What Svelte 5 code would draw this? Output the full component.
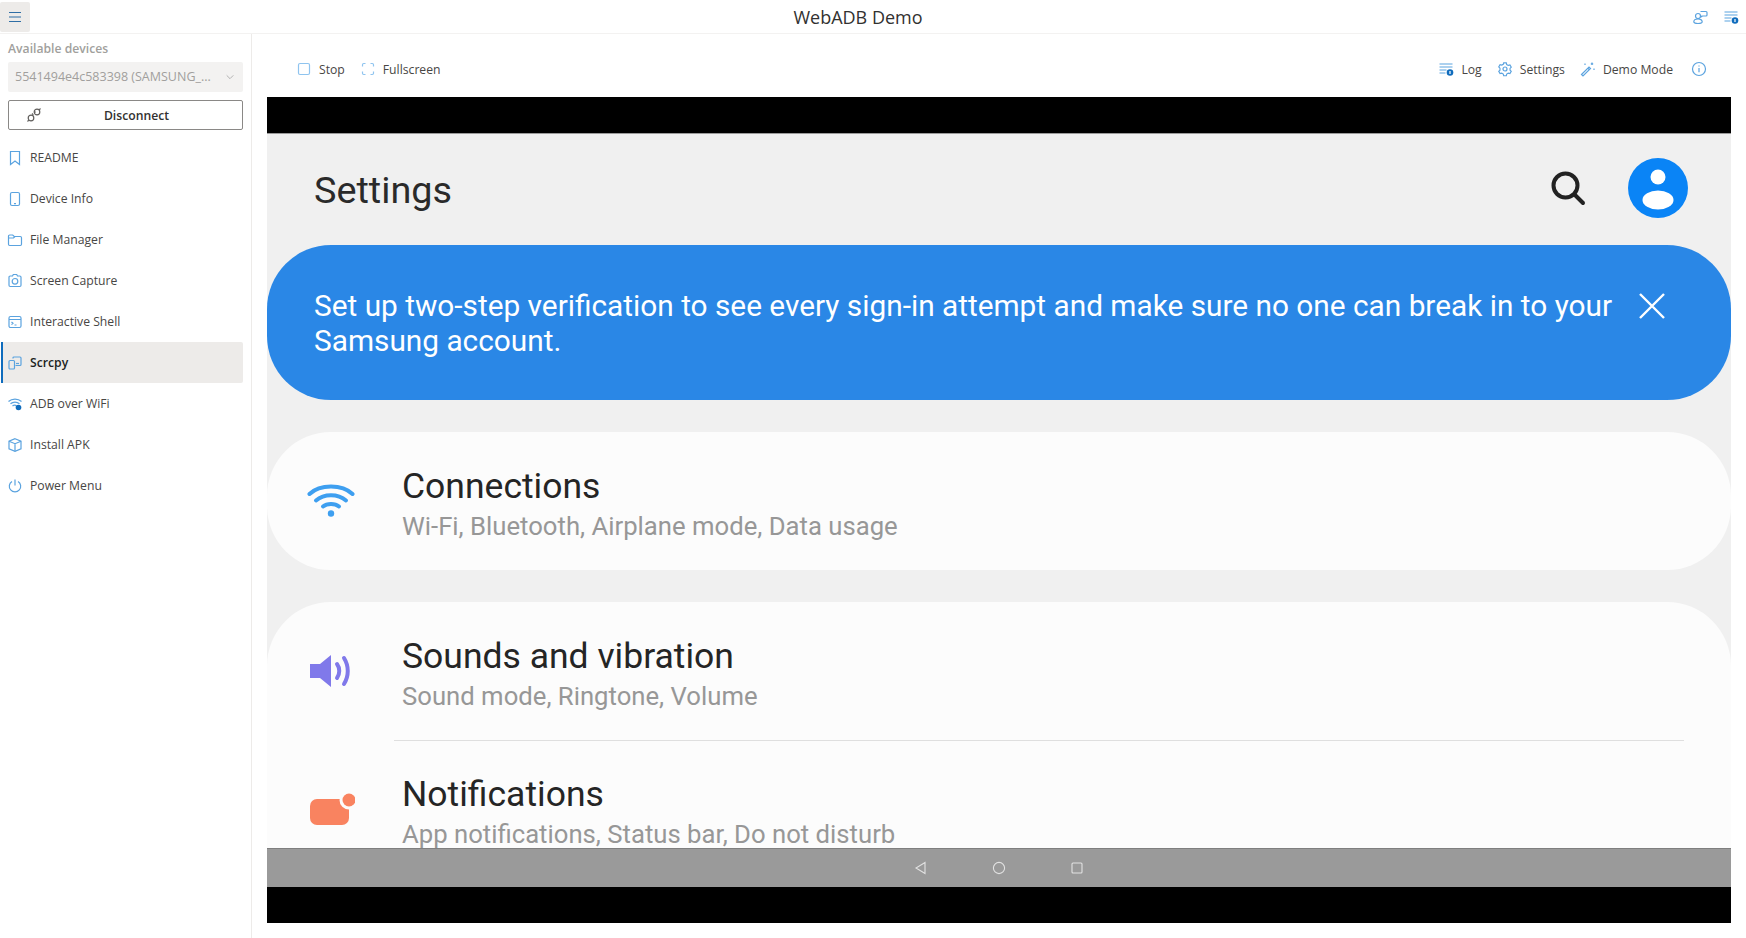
<script>
  const nav = [
    { name: 'README', icon: 'readme' },
    { name: 'Device Info', icon: 'device' },
    { name: 'File Manager', icon: 'folder' },
    { name: 'Screen Capture', icon: 'camera' },
    { name: 'Interactive Shell', icon: 'shell' },
    { name: 'Scrcpy', icon: 'scrcpy', active: true },
    { name: 'ADB over WiFi', icon: 'wifi' },
    { name: 'Install APK', icon: 'box' },
    { name: 'Power Menu', icon: 'power' }
  ];
</script>

{#snippet icon(name)}
  <svg class="ico" viewBox="0 0 16 16" fill="none" stroke="currentColor" stroke-width="1.2">
    {#if name === 'readme'}
      <path d="M3.5 1.5h9v13L8 11 3.5 14.500z" />
    {:else if name === 'device'}
      <rect x="3.5" y="1.5" width="9" height="13" rx="1.5" />
      <path d="M7 12.700h2" />
    {:else if name === 'folder'}
      <path d="M1.500 4.200c0-.7.5-1.200 1.200-1.200h3l1.500 1.500h6.100c.7 0 1.200.5 1.200 1.200v6.600c0 .7-.5 1.200-1.200 1.200H2.700c-.7 0-1.200-.5-1.200-1.200z" />
      <path d="M1.500 6h5l1.500-1.500" />
    {:else if name === 'camera'}
      <path d="M5.500 3l.8-1.500h3.400l.8 1.500h2.300c.7 0 1.200.5 1.200 1.200v8.100c0 .7-.5 1.200-1.200 1.200H3.200c-.7 0-1.200-.5-1.200-1.200V4.200C2 3.500 2.500 3 3.200 3z" />
      <circle cx="8" cy="8.300" r="2.800" />
    {:else if name === 'shell'}
      <rect x="2" y="2.500" width="12" height="11" rx="1.500" />
      <path d="M2 5.500h12M4.500 8l1.500 1.300-1.500 1.300M7.500 11h2" />
    {:else if name === 'scrcpy'}
      <path d="M6 3.500V3c0-.6.4-1 1-1h6c.6 0 1 .4 1 1v6.500c0 .6-.4 1-1 1H8.500" />
      <rect x="2" y="5.500" width="5.500" height="8.500" rx="1" />
      <path d="M9 8.500h3" />
    {:else if name === 'wifi'}
      <path d="M1.500 5.500c3.500-3.300 9.500-3.300 13 0M3.500 7.800c2.500-2.200 6.500-2.200 9 0M5.500 10c1.300-1 3-1 4 0" />
      <circle cx="11.500" cy="11.500" r="2.800" fill="#0f6cbd" stroke="none" />
    {:else if name === 'box'}
      <path d="M8 1.700l6 2.500v7.600l-6 2.500-6-2.500V4.200z" />
      <path d="M2 4.200l6 2.500 6-2.500M8 6.700v7.600" />
    {:else if name === 'power'}
      <path d="M8 1.500v6" />
      <path d="M5 3.400a5.700 5.700 0 1 0 6 0" />
    {:else if name === 'log'}
      <path d="M1.500 3h13M1.500 6h13M1.500 9h7M1.500 12h6" />
      <circle cx="12" cy="11.500" r="3.300" fill="#0f6cbd" stroke="none" />
      <path d="M12 10v3" stroke="#fff" />
    {:else if name === 'gear'}
      <path d="M6.600 1.500h2.800l.4 1.800 1.600.9 1.800-.5 1.400 2.400-1.300 1.300v1.800l1.300 1.300-1.400 2.400-1.800-.5-1.600.9-.4 1.800H6.600l-.4-1.800-1.600-.9-1.800.5-1.400-2.400 1.300-1.300V7.100L1.400 5.800l1.400-2.400 1.800.5 1.600-.9z" transform="translate(.4 .4) scale(.95)" />
      <circle cx="8" cy="8" r="2" />
    {:else if name === 'wand'}
      <path d="M1.500 13.500l7.500-7.500 1.500 1.500-7.500 7.500z" />
      <path d="M7.800 7.200l1.500 1.500M12 1.500v2.500M10.800 2.800h2.400M14 7.500v1.500M5 2.500v1.500" />
    {:else if name === 'info'}
      <circle cx="8" cy="8" r="6.500" />
      <path d="M8 7v4.200M8 4.500v1.100" />
    {:else if name === 'stop'}
      <rect x="2.500" y="2.500" width="11" height="11" rx="1.500" />
    {:else if name === 'full'}
      <path d="M2.500 5.500V3.700c0-.7.5-1.200 1.200-1.200h1.800M10.500 2.500h1.800c.7 0 1.200.5 1.200 1.200v1.800M13.500 10.500v1.800c0 .7-.5 1.200-1.200 1.200h-1.800M5.500 13.500H3.700c-.7 0-1.200-.5-1.200-1.200v-1.800" />
    {:else if name === 'chat'}
      <circle cx="6" cy="7" r="2.500" />
      <path d="M1.800 12.800c0-1.700 2-2.800 4.200-2.800s4.200 1.100 4.200 2.800c0 1-2 1.700-4.200 1.700s-4.200-.7-4.200-1.700z" />
      <path d="M8.500 2.500h5.500a1 1 0 0 1 1 1v2.500a1 1 0 0 1-1 1h-3.500l-1.500 1v-1.500" />
    {:else if name === 'plug'}
      <circle cx="5" cy="11" r="2.800" />
      <circle cx="11" cy="5" r="2.800" />
      <path d="M2.800 13.200l-1.300 1.300M13.200 2.800l1.300-1.300M6 6.500l1.300 1.300M8.500 4.500l1 1" />
    {/if}
  </svg>
{/snippet}

<div class="page">
  <header>
    <button class="burger" aria-label="Menu">
      <svg viewBox="0 0 16 16" width="16" height="16" fill="none" stroke="#2f6ea5" stroke-width="1.100"><path d="M2 3.500h12M2 8h12M2 12.500h12" /></svg>
    </button>
    <h1>WebADB Demo</h1>
    <div class="top-icons">
      <span class="top-ico">{@render icon('chat')}</span>
      <span class="top-ico">{@render icon('log')}</span>
    </div>
  </header>

  <div class="body">
    <aside>
      <div class="devices">
        <div class="label">Available devices</div>
        <div class="select">
          <span>5541494e4c583398 (SAMSUNG_...</span>
          <svg viewBox="0 0 12 12" width="10" height="10" fill="none" stroke="#a6a6a6"><path d="M2 4l4 4 4-4" /></svg>
        </div>
        <button class="disconnect">
          <span class="plug">{@render icon('plug')}</span>
          <span class="disc-text">Disconnect</span>
        </button>
      </div>
      <nav>
        {#each nav as item}
          <div class="item" class:active={item.active}>
            {@render icon(item.icon)}
            <span>{item.name}</span>
          </div>
        {/each}
      </nav>
    </aside>

    <main>
      <div class="toolbar">
        <div class="tool-group">
          <span class="tool light">{@render icon('stop')}Stop</span>
          <span class="tool light">{@render icon('full')}Fullscreen</span>
        </div>
        <div class="tool-group">
          <span class="tool">{@render icon('log')}Log</span>
          <span class="tool">{@render icon('gear')}Settings</span>
          <span class="tool">{@render icon('wand')}Demo Mode</span>
          <span class="tool info">{@render icon('info')}</span>
        </div>
      </div>

      <div class="device-frame">
        <div class="black"></div>
        <div class="screen">
          <div class="scroll">
            <div class="title-row">
              <div class="title">Settings</div>
              <svg class="search" viewBox="0 0 36 36" fill="none" stroke="#222" stroke-width="4" stroke-linecap="round">
                <circle cx="15.500" cy="15.500" r="12" />
                <path d="M24.500 24.500L33 33" />
              </svg>
              <svg class="avatar" viewBox="0 0 60 60">
                <circle cx="30" cy="30" r="30" fill="#0a84f6" />
                <circle cx="30" cy="19" r="7.500" fill="#fff" />
                <ellipse cx="30" cy="42" rx="15.500" ry="9.500" fill="#fff" />
              </svg>
            </div>

            <div class="banner">
              <p>Set up two-step verification to see every sign-in attempt and make sure no one can break in to your Samsung account.</p>
              <svg class="close" viewBox="0 0 26 26" fill="none" stroke="#fff" stroke-width="2.400"><path d="M1 1l24 24M25 1L1 25" /></svg>
            </div>

            <div class="card one">
              <svg class="s-ico wifi" viewBox="0 0 48 36" fill="none" stroke="#3e9ff0" stroke-width="4" stroke-linecap="round">
                <path d="M2.500 12C13 2 35 2 45.500 12" />
                <path d="M9 18.500c8-7 22-7 30 0" />
                <path d="M16 24.500c4-3.500 12-3.500 16 0" />
                <circle cx="24" cy="31.500" r="3.200" fill="#3e9ff0" stroke="none" />
              </svg>
              <div class="s-text">
                <div class="s-title">Connections</div>
                <div class="s-sub">Wi-Fi, Bluetooth, Airplane mode, Data usage</div>
              </div>
            </div>

            <div class="card two">
              <div class="row sounds">
                <svg class="s-ico" viewBox="0 0 48 36" fill="none" stroke="#8079ea" stroke-width="4" stroke-linecap="round">
                  <path d="M3 11h10L24 2v32L13 25H3z" fill="#8079ea" stroke="none" />
                  <path d="M30 11c3 4 3 10 0 14" />
                  <path d="M37 5c5 8 5 18 0 26" />
                </svg>
                <div class="s-text">
                  <div class="s-title">Sounds and vibration</div>
                  <div class="s-sub">Sound mode, Ringtone, Volume</div>
                </div>
              </div>
              <div class="sep"></div>
              <div class="row notif">
                <svg class="s-ico" viewBox="0 0 48 36">
                  <rect x="3" y="7" width="39" height="26" rx="7" fill="#f98360" />
                  <circle cx="42" cy="8" r="9.500" fill="#fcfcfc" />
                  <circle cx="42" cy="8" r="6.500" fill="#f98360" />
                </svg>
                <div class="s-text">
                  <div class="s-title">Notifications</div>
                  <div class="s-sub">App notifications, Status bar, Do not disturb</div>
                </div>
              </div>
            </div>
          </div>

          <div class="navbar">
            <svg viewBox="0 0 14 14" fill="none" stroke="#e2e2e2" stroke-width="1.100"><path d="M11 1.500v11L2 7z" /></svg>
            <svg viewBox="0 0 14 14" fill="none" stroke="#e2e2e2" stroke-width="1.100"><circle cx="7" cy="7" r="5.600" /></svg>
            <svg viewBox="0 0 14 14" fill="none" stroke="#e2e2e2" stroke-width="1.100"><rect x="2" y="2" width="10" height="10" rx="1" /></svg>
          </div>
        </div>
        <div class="black"></div>
      </div>
    </main>
  </div>
</div>

<style>
  :global(body) {
    margin: 0;
    background: #fff;
    font-family: "Open Sans", "Noto Sans", sans-serif;
    color: #323130;
  }

  .page {
    height: 938px;
    display: flex;
    flex-direction: column;
    overflow: hidden;
  }

  header {
    height: 34px;
    flex: none;
    display: flex;
    align-items: center;
    justify-content: space-between;
    position: relative;
    border-bottom: 1px solid #f3f2f1;
    box-sizing: border-box;
  }

  h1 {
    position: absolute;
    left: 0;
    right: 0;
    top: 5px;
    margin: 0;
    padding-right: 30px;
    text-align: center;
    font-size: 18px;
    line-height: 24px;
    font-weight: 400;
  }

  .burger {
    width: 30px;
    height: 30px;
    padding: 0;
    margin-top: 1px;
    border: 0;
    border-radius: 2px;
    background: #edebe9;
    display: flex;
    align-items: center;
    justify-content: center;
  }

  .top-icons {
    display: flex;
    gap: 15px;
    padding-right: 7px;
    align-items: center;
  }

  .top-ico {
    display: flex;
  }

  .ico {
    width: 16px;
    height: 16px;
    flex: none;
    color: #5ba3df;
  }

  .body {
    flex: 1;
    display: flex;
    min-height: 0;
  }

  aside {
    width: 251px;
    flex: none;
    border-right: 1px solid #edebe9;
  }

  .devices {
    padding: 2px 8px 0 8px;
  }

  .label {
    font-size: 12.200px;
    font-weight: 600;
    line-height: 26px;
    color: #a19f9d;
  }

  .select {
    height: 30px;
    background: #f3f2f1;
    border-radius: 2px;
    display: flex;
    align-items: center;
    justify-content: space-between;
    padding: 0 8px 1px 7px;
    box-sizing: border-box;
    color: #a19f9d;
    font-size: 12.500px;
  }

  .disconnect {
    margin-top: 8px;
    width: 100%;
    height: 30px;
    padding: 0;
    display: flex;
    align-items: center;
    background: #fff;
    border: 1px solid #8a8886;
    border-radius: 2px;
    font: 600 12.200px "Open Sans", sans-serif;
    color: #323130;
  }

  .plug {
    display: flex;
    margin-left: 17px;
  }

  .plug .ico {
    color: #605e5c;
  }

  .disc-text {
    flex: 1;
    padding-right: 11px;
    text-align: center;
  }

  nav {
    margin-top: 7px;
    padding-right: 8px;
  }

  .item {
    height: 41px;
    display: flex;
    align-items: center;
    gap: 7px;
    padding-left: 7px;
    font-size: 12.200px;
    color: #484644;
    position: relative;
    box-sizing: border-box;
  }

  .item.active {
    background: #edebe9;
    font-weight: 600;
    color: #201f1e;
    margin-left: 1px;
    padding-left: 6px;
    border-radius: 2px;
  }

  .item.active::before {
    content: "";
    position: absolute;
    left: 0;
    top: 0;
    bottom: 0;
    width: 2px;
    background: #0f6cbd;
  }

  main {
    flex: 1;
    min-width: 0;
  }

  .toolbar {
    height: 62px;
    padding: 8px 39px 0 44px;
    display: flex;
    align-items: center;
    justify-content: space-between;
    box-sizing: border-box;
  }

  .tool-group {
    display: flex;
    gap: 15px;
  }

  .tool {
    display: flex;
    align-items: center;
    gap: 7px;
    font-size: 12.200px;
    color: #484644;
  }

  .info {
    margin-left: 3px;
  }

  .light .ico {
    color: #8fc4ef;
  }

  .device-frame {
    margin: 1px 15px 0 15px;
    width: 1464px;
  }

  .black {
    height: 36px;
    background: #000;
  }

  .screen {
    height: 754px;
    display: flex;
    flex-direction: column;
    background: #f0f0f0;
    border-top: 1px solid #9a9a9a;
    box-sizing: border-box;
    font-family: Roboto, sans-serif;
  }

  .scroll {
    flex: 1;
    overflow: hidden;
    min-height: 0;
  }

  .title-row {
    height: 111px;
    display: flex;
    align-items: center;
    padding: 0 43px 4px 47px;
    box-sizing: border-box;
  }

  .title {
    flex: 1;
    font-size: 37.800px;
    color: #2a2a2a;
    margin-top: 5px;
  }

  .search {
    width: 36px;
    height: 36px;
    margin-right: 42px;
  }

  .avatar {
    width: 60px;
    height: 60px;
    margin-top: 1px;
  }

  .banner {
    height: 155px;
    border-radius: 64px;
    background: #2a87e6;
    color: #fff;
    display: flex;
    align-items: center;
    padding: 0 47px;
    box-sizing: border-box;
    justify-content: space-between;
  }

  .banner p {
    margin: 0;
    width: 1310px;
    font-size: 29.800px;
    line-height: 35px;
  }

  .close {
    width: 26px;
    height: 26px;
    margin-right: 19px;
    margin-top: -34px;
  }

  .card {
    background: #fcfcfc;
    border-radius: 64px;
    margin-top: 32px;
  }

  .one {
    height: 138px;
  }

  .one, .row {
    display: flex;
    align-items: center;
  }

  .two {
    height: 320px;
    border-radius: 64px 64px 0 0;
  }

  .sounds {
    height: 138px;
  }

  .notif {
    height: 137px;
  }

  .s-ico {
    width: 48px;
    height: 36px;
    margin-left: 40px;
    margin-right: 47px;
    flex: none;
  }

  .wifi {
    margin-top: -2px;
  }

  .s-text {
    padding-top: 5px;
  }

  .s-title {
    font-size: 35.500px;
    line-height: 42px;
    color: #252525;
  }

  .s-sub {
    font-size: 25.700px;
    line-height: 34px;
    margin-top: 2px;
    color: #979797;
  }

  .sep {
    height: 1px;
    background: #dfdfdf;
    margin: 0 47px 0 127px;
  }

  .navbar {
    height: 38px;
    flex: none;
    background: #9a9a9a;
    border-top: 1px solid #7f7f7f;
    display: flex;
    justify-content: center;
    align-items: center;
    gap: 64px;
  }

  .navbar svg {
    width: 14px;
    height: 14px;
  }
</style>
